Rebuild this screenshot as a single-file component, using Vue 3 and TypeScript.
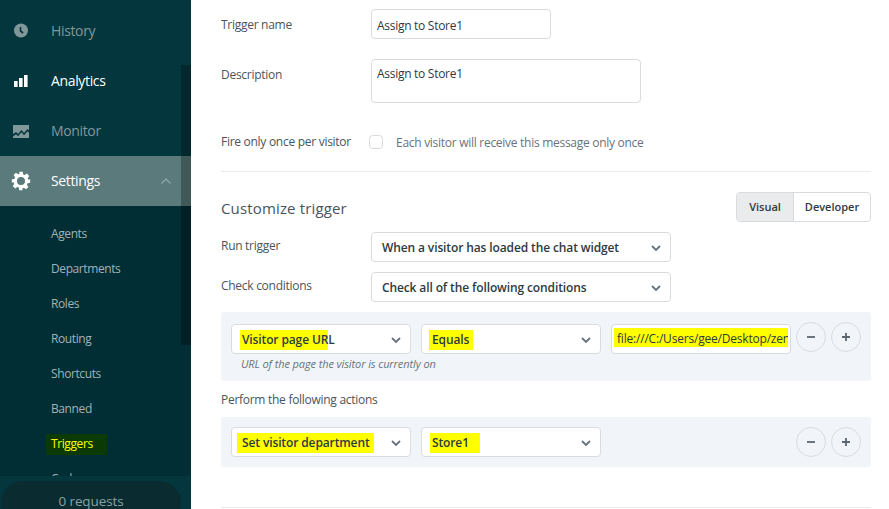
<script setup lang="ts">
const subItems: string[] = ['Agents', 'Departments', 'Roles', 'Routing', 'Shortcuts', 'Banned', 'Triggers', 'Codes']
</script>

<template>
  <div class="page">
    <aside class="sidebar">
      <div class="nav">
        <div class="nav-item muted">
          <svg class="icon" viewBox="0 0 16 16"><circle cx="8" cy="7.500" r="7" fill="currentColor" /><path d="M7.500 4v4l2.600 2" fill="none" stroke="#03363d" stroke-width="1.600" /></svg>
          <span>History</span>
        </div>
        <div class="nav-item bright">
          <svg class="icon" viewBox="0 0 16 16"><rect x="1" y="8" width="3.600" height="6" fill="currentColor" /><rect x="6" y="5" width="3.600" height="9" fill="currentColor" /><rect x="11" y="2" width="3.600" height="12" fill="currentColor" /></svg>
          <span>Analytics</span>
        </div>
        <div class="nav-item muted">
          <svg class="icon" viewBox="0 0 16 16"><path d="M0 2h16v5.500l-1.500-1.500-3.500 4-2.500-3-3.500 4-2-2L0 11zM0 13.500l3-2.200 2 2 3.500-4 2.500 3 3.500-4 1.500 1.500V15H0z" fill="currentColor" /></svg>
          <span>Monitor</span>
        </div>
        <div class="nav-item active">
          <svg class="icon gear" viewBox="0 0 24 24"><path fill="currentColor" fill-rule="evenodd" d="M10 1h4l.6 3.100 1.900.8 2.600-1.800 2.800 2.800-1.800 2.600.8 1.900L23 10v4l-3.100.6-.8 1.900 1.800 2.600-2.800 2.800-2.600-1.800-1.900.8L13.900 23h-4l-.5-3.100-1.900-.8-2.600 1.800-2.800-2.800 1.800-2.600-.8-1.900L1 14v-4l3.100-.5.8-1.900-1.800-2.700 2.800-2.800 2.600 1.800 1.900-.8zM12 7.200a4.800 4.800 0 1 0 0 9.600 4.800 4.800 0 0 0 0-9.600z" /></svg>
          <span>Settings</span>
          <svg class="caret" viewBox="0 0 12 8"><path d="M1.500 6.500 6 2l4.500 4.500" fill="none" stroke="currentColor" stroke-width="1.500" /></svg>
        </div>
      </div>
      <div class="sub">
        <div v-for="item in subItems" :key="item" class="sub-item">
          <span :class="{ trig: item === 'Triggers' }">{{ item }}</span>
        </div>
      </div>
      <div class="scroll"></div>
      <div class="footer"><div class="pill">0 requests</div></div>
    </aside>

    <main class="main">
      <div class="row r-name">
        <label class="lab">Trigger name</label>
        <div class="input w180">Assign to Store1</div>
      </div>
      <div class="row r-desc">
        <label class="lab">Description</label>
        <div class="input area">Assign to Store1</div>
      </div>
      <div class="row r-fire">
        <label class="lab">Fire only once per visitor</label>
        <span class="check"></span>
        <span class="note">Each visitor will receive this message only once</span>
      </div>
      <hr class="rule rule1" />
      <div class="head">
        <h2>Customize trigger</h2>
        <div class="toggle"><span class="on">Visual</span><span>Developer</span></div>
      </div>
      <div class="row r-sel">
        <label class="lab">Run trigger</label>
        <div class="select w300"><b>When a visitor has loaded the chat widget</b><svg class="chev" viewBox="0 0 10 6"><path d="M1 1l4 4 4-4" fill="none" stroke="currentColor" stroke-width="1.800" /></svg></div>
      </div>
      <div class="row r-sel r-sel2">
        <label class="lab">Check conditions</label>
        <div class="select w300"><b>Check all of the following conditions</b><svg class="chev" viewBox="0 0 10 6"><path d="M1 1l4 4 4-4" fill="none" stroke="currentColor" stroke-width="1.800" /></svg></div>
      </div>
      <section class="panel p1">
        <div class="fields">
          <div class="select w180"><b><mark class="hl hl-visitor">Visitor page UR</mark>L</b><svg class="chev" viewBox="0 0 10 6"><path d="M1 1l4 4 4-4" fill="none" stroke="currentColor" stroke-width="1.800" /></svg></div>
          <div class="select w180"><b><mark class="hl hl-equals">Equals</mark></b><svg class="chev" viewBox="0 0 10 6"><path d="M1 1l4 4 4-4" fill="none" stroke="currentColor" stroke-width="1.800" /></svg></div>
          <div class="input w180 url"><mark class="hl-url">file:///C:/Users/gee/Desktop/zendesk</mark></div>
          <div class="circles">
            <span class="circle"><svg viewBox="0 0 10 10"><path d="M1 5h8" stroke="currentColor" stroke-width="1.800" /></svg></span>
            <span class="circle"><svg viewBox="0 0 10 10"><path d="M1 5h8M5 1v8" stroke="currentColor" stroke-width="1.800" /></svg></span>
          </div>
        </div>
        <div class="hint">URL of the page the visitor is currently on</div>
      </section>
      <div class="perform">Perform the following actions</div>
      <section class="panel p2">
        <div class="fields">
          <div class="select w180"><b><mark class="hl hl-set">Set visitor department</mark></b><svg class="chev" viewBox="0 0 10 6"><path d="M1 1l4 4 4-4" fill="none" stroke="currentColor" stroke-width="1.800" /></svg></div>
          <div class="select w180"><b><mark class="hl hl-store">Store1</mark></b><svg class="chev" viewBox="0 0 10 6"><path d="M1 1l4 4 4-4" fill="none" stroke="currentColor" stroke-width="1.800" /></svg></div>
          <div class="circles right">
            <span class="circle"><svg viewBox="0 0 10 10"><path d="M1 5h8" stroke="currentColor" stroke-width="1.800" /></svg></span>
            <span class="circle"><svg viewBox="0 0 10 10"><path d="M1 5h8M5 1v8" stroke="currentColor" stroke-width="1.800" /></svg></span>
          </div>
        </div>
      </section>
      <hr class="rule rule2" />
    </main>
  </div>
</template>

<style>
html, body { margin: 0; background: #fff; overflow: hidden; }
</style>

<style scoped>
.page {
  width: 889px; height: 509px; display: flex; overflow: hidden;
  font-family: "Open Sans", "Noto Sans", sans-serif; font-size: 12px; letter-spacing: -0.28px; color: #49545c;
}
.sidebar { position: relative; width: 191px; flex: none; height: 509px; background: #012d34; overflow: hidden; }
.nav { background: #03363d; padding-top: 6px; }
.nav-item { height: 50px; display: flex; align-items: center; font-size: 14px; letter-spacing: -0.35px; position: relative; padding-left: 12px; }
.nav-item > span { margin-left: 21px; padding-bottom: 2px; }
.icon { width: 18px; height: 16px; flex: none; }
.gear { width: 20px; height: 20px; margin-left: -1px; margin-right: -1px; }
.muted { color: #81989a; }
.bright { color: #fff; }
.active { background: #5a7a7c; color: #fff; }
.caret { position: absolute; left: 160px; top: 21px; width: 12px; height: 8px; color: #8ba2a3; }
.sub { padding-top: 10px; }
.sub-item { height: 35px; line-height: 35px; padding-left: 51px; font-size: 12px; letter-spacing: -0.4px; color: #a0b4b6; }
.trig { color: #ffff00; background: #0c3a05; box-shadow: -5px 0 0 #0c3a05, 14px 0 0 #0c3a05; padding: 1px 0 3px; }
.scroll { position: absolute; left: 181px; top: 65px; width: 10px; height: 280px; background: rgba(0, 0, 0, 0.28); }
.footer { position: absolute; left: 0; right: 0; bottom: 0; height: 33px; background: #03363d; }
.pill { margin: 5px 10px 0 1px; height: 44px; border-radius: 22px; background: #0a2b30; color: #8ba2a3; text-align: center; font-size: 13.500px; letter-spacing: -0.1px; line-height: 40px; }

.main { flex: 1; padding: 0 18px 0 30px; min-width: 0; }
.row { display: flex; align-items: flex-start; }
.lab { width: 150px; height: 30px; flex: none; line-height: 32px; color: #49545c; }
.r-name { padding-top: 9px; }
.r-desc { padding-top: 20px; }
.r-fire { padding-top: 24px; height: 30px; align-items: center; }
.r-fire .lab { line-height: 30px; }
.input, .select {
  box-sizing: border-box; height: 30px; line-height: 31px; border: 1px solid #d8dcde; border-radius: 4px;
  background: #fff; padding: 0 5px; color: #2f3941; white-space: nowrap;
}
.w180 { width: 180px; flex: none; }
.w300 { width: 300px; flex: none; }
.area { width: 270px; height: 44px; line-height: 27px; padding: 0 5px; }
.check { box-sizing: border-box; width: 14px; height: 14px; border: 1px solid #d8dcde; border-radius: 4px; margin-left: -2px; flex: none; }
.note { margin-left: 13px; color: #68737d; }
.rule { border: 0; height: 1px; background: #e9ebed; margin: 0; }
.rule1 { margin-top: 14px; }
.head { display: flex; justify-content: space-between; align-items: center; height: 30px; margin-top: 20px; }
h2 { margin: 0; padding-top: 1px; font-size: 15px; letter-spacing: 0.15px; font-weight: 400; color: #49545c; }
.toggle { display: flex; box-sizing: border-box; width: 135px; height: 30px; border: 1px solid #d8dcde; border-radius: 4px; overflow: hidden; font-size: 11px; letter-spacing: 0; font-weight: 600; color: #2f3941; }
.toggle span { flex: 1; text-align: center; line-height: 28px; }
.toggle .on { flex: none; width: 56px; background: #e9ebed; border-right: 1px solid #d8dcde; }
.r-sel { padding-top: 10px; }
.r-sel .lab { line-height: 28px; }
.select { display: flex; justify-content: space-between; align-items: center; padding: 2px 10px 0; position: relative; line-height: 20px; }
.select b { font-weight: 600; color: #2f3941; letter-spacing: -0.12px; }
.chev { width: 10px; height: 6px; color: #68737d; flex: none; margin-right: -1px; }
.panel { background: #f1f5f9; border-radius: 3px; margin-top: 10px; box-sizing: border-box; padding: 12px 10px 0; }
.p1 { height: 69px; }
.p2 { height: 50px; padding-top: 10px; margin-top: 9px; }
.fields { display: flex; gap: 10px; position: relative; }
.url { padding: 3px 2px; line-height: 22px; overflow: hidden; letter-spacing: -0.2px; }
.hl-url { display: block; background: #ffff00; color: #2f3941; padding: 0 1px 0 3px; height: 19px; overflow: hidden; }
.hl { background: #ffff00; color: inherit; padding: 1px 0 2px; }
.hl-visitor { padding-left: 2px; margin-left: -2px; }
.hl-equals { padding-left: 3px; padding-right: 4px; margin-left: -3px; }
.hl-set { padding-left: 5px; padding-right: 4px; margin-left: -5px; }
.hl-store { padding-left: 2px; padding-right: 11px; margin-left: -2px; }
.circles { display: flex; gap: 5px; margin-left: -5px; margin-top: -2px; }
.circles.right { margin-left: auto; margin-top: 0; }
.circle { box-sizing: border-box; width: 30px; height: 30px; border: 1px solid #d8dcde; border-radius: 50%; display: flex; align-items: center; justify-content: center; color: #5d676f; }
.circle svg { width: 10px; height: 10px; }
.hint { font-style: italic; font-size: 11px; letter-spacing: -0.1px; color: #68737d; margin: 2px 0 0 10px; }
.perform { margin-top: 11px; line-height: 16px; height: 16px; }
.rule2 { margin-top: 40px; }
</style>
